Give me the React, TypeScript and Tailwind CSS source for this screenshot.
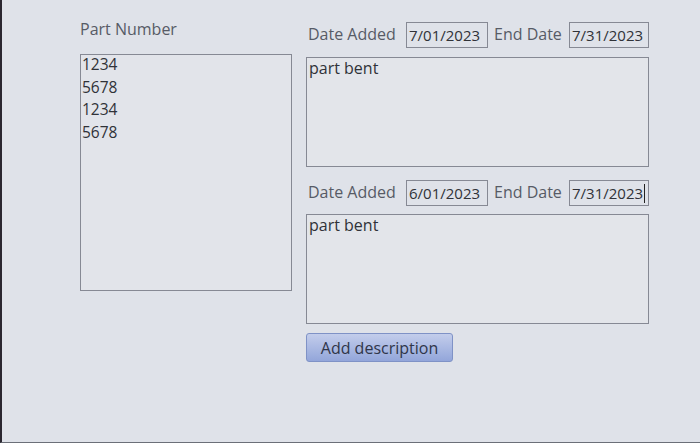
import React from "react";

const font = { fontFamily: '"Open Sans", "Noto Sans", "Liberation Sans", sans-serif' };

function DateRow({ added, end, cursor }: { added: string; end: string; cursor?: boolean }) {
  return (
    <div className="flex items-center h-[26px]">
      <div className="w-[100px] pl-[2px] text-[16px] leading-[20px] text-[#575b66] -mt-[3px]">Date Added</div>
      <div className="w-[82px] h-[26px] border border-[#868994] flex items-center pl-[2px] text-[15px] leading-[20px] text-[#303238]">
        {added}
      </div>
      <div className="w-[81px] pl-[6px] text-[16px] leading-[20px] text-[#575b66] -mt-[3px]">End Date</div>
      <div className="w-[80px] h-[26px] border border-[#868994] flex items-center pl-[2px] text-[15px] leading-[20px] text-[#303238]">
        <span>{end}</span>
        {cursor && <span className="inline-block w-[1px] h-[19px] bg-[#222] ml-[1px]" />}
      </div>
    </div>
  );
}

function Memo({ text }: { text: string }) {
  return (
    <div className="w-[343px] h-[110px] border border-[#868994] bg-[#e3e5ea] px-[2px] text-[16px] leading-[20px] text-[#303238]">
      {text}
    </div>
  );
}

export default function App() {
  return (
    <div
      style={font}
      className="w-[700px] h-[443px] bg-[#dfe2e9] border-l-[2px] border-l-[#2b2730] border-b border-b-[#6b6f78] flex pl-[78px] pt-[19px] overflow-hidden"
    >
      <div className="w-[212px] flex flex-col">
        <div className="h-[35px] text-[16px] leading-[20px] text-[#575b66]">Part Number</div>
        <div className="h-[237px] border border-[#868994] bg-[#e2e4ea] px-[1px] text-[15.5px] leading-[22.5px] text-[#303238]">
          <div className="-mt-[2px]">
            <div>1234</div>
            <div>5678</div>
            <div>1234</div>
            <div>5678</div>
          </div>
        </div>
      </div>
      <div className="ml-[14px] pt-[3px] flex flex-col">
        <DateRow added="7/01/2023" end="7/31/2023" />
        <div className="mt-[9px]">
          <Memo text="part bent" />
        </div>
        <div className="mt-[13px]">
          <DateRow added="6/01/2023" end="7/31/2023" cursor />
        </div>
        <div className="mt-[8px]">
          <Memo text="part bent" />
        </div>
        <div className="mt-[9px]">
          <button className="w-[147px] h-[29px] rounded-[3px] border border-[#7f92c6] bg-gradient-to-b from-[#c3cdeb] to-[#93a6da] text-[16px] leading-[20px] text-[#30364a] flex items-center justify-center">
            Add description
          </button>
        </div>
      </div>
    </div>
  );
}
